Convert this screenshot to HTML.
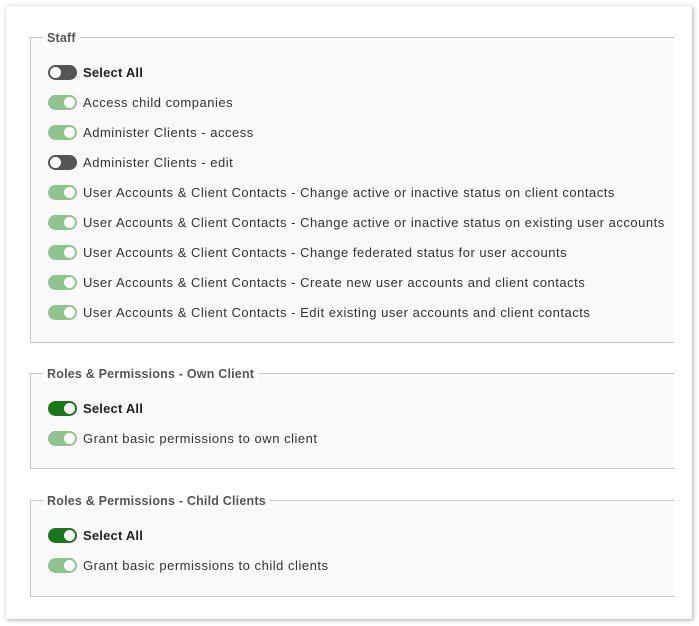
<!DOCTYPE html><html><head><style>
body{margin:0;width:699px;height:626px;background:#fff;font-family:"Liberation Sans",sans-serif;position:relative;overflow:hidden}
.card{position:absolute;left:6px;top:6px;width:686px;height:613px;background:#fff;box-shadow:1px 1px 4px rgba(0,0,0,.35)}
.fs{position:absolute;left:30px;width:643px;background:#f9f9f9;border:1px solid #c8c8c8;border-right:none}
.lg{position:absolute;left:12px;top:-8px;background:#fff;padding:0 4px;font-size:12.5px;font-weight:bold;color:#555;line-height:16px;box-shadow:0 8px 0 #f9f9f9;letter-spacing:0.2px}
.row{position:absolute;left:17px;height:16px;font-size:13px;color:#333;line-height:16px;white-space:nowrap;letter-spacing:0.52px}
.t{position:absolute;left:0;top:0;width:29px;height:15px;border-radius:8px;background:#8fc48f}
.t::after{content:"";position:absolute;right:2px;top:2px;width:11px;height:11px;border-radius:50%;background:#fff}
.t.off{background:#555}.t.off::after{left:2px;right:auto}
.t.on{background:#187818}
.row span{position:absolute;left:35px;top:0}
.b{font-weight:bold;color:#222;letter-spacing:0.2px}
</style></head><body>
<div class="card"></div>
<div class="fs" style="top:37px;height:304px"><div class="lg">Staff</div>
<div class="row" style="top:27px"><div class="t off"></div><span class="b">Select All</span></div>
<div class="row" style="top:57px"><div class="t"></div><span>Access child companies</span></div>
<div class="row" style="top:87px"><div class="t"></div><span>Administer Clients - access</span></div>
<div class="row" style="top:117px"><div class="t off"></div><span>Administer Clients - edit</span></div>
<div class="row" style="top:147px"><div class="t"></div><span>User Accounts &amp; Client Contacts - Change active or inactive status on client contacts</span></div>
<div class="row" style="top:177px"><div class="t"></div><span>User Accounts &amp; Client Contacts - Change active or inactive status on existing user accounts</span></div>
<div class="row" style="top:207px"><div class="t"></div><span>User Accounts &amp; Client Contacts - Change federated status for user accounts</span></div>
<div class="row" style="top:237px"><div class="t"></div><span>User Accounts &amp; Client Contacts - Create new user accounts and client contacts</span></div>
<div class="row" style="top:267px"><div class="t"></div><span>User Accounts &amp; Client Contacts - Edit existing user accounts and client contacts</span></div>
</div>
<div class="fs" style="top:373px;height:94px"><div class="lg">Roles &amp; Permissions - Own Client</div>
<div class="row" style="top:27px"><div class="t on"></div><span class="b">Select All</span></div>
<div class="row" style="top:57px"><div class="t"></div><span>Grant basic permissions to own client</span></div>
</div>
<div class="fs" style="top:500px;height:95px"><div class="lg">Roles &amp; Permissions - Child Clients</div>
<div class="row" style="top:27px"><div class="t on"></div><span class="b">Select All</span></div>
<div class="row" style="top:57px"><div class="t"></div><span>Grant basic permissions to child clients</span></div>
</div>
</body></html>
